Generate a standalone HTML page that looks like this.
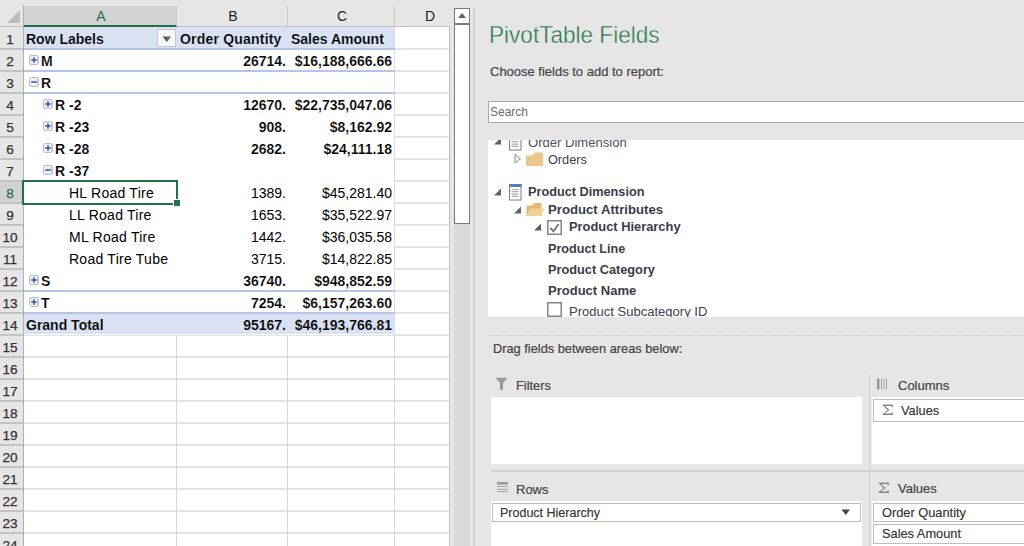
<!DOCTYPE html>
<html><head><meta charset="utf-8"><style>
html,body{margin:0;padding:0;}
body{width:1024px;height:546px;position:relative;overflow:hidden;background:#e6e6e6;font-family:'Liberation Sans',sans-serif;}
div{position:absolute;}
.t{position:absolute;white-space:nowrap;font-family:'Liberation Sans',sans-serif;}
svg{display:block}
</style></head><body>
<svg style="position:absolute;left:0;top:0" width="24" height="27"><polygon points="20,10 20,23 7,23" fill="#bcbcbc"/></svg>
<div style="left:0px;top:26px;width:450px;height:1px;background:#c2c2c2"></div>
<div style="left:23px;top:5px;width:1px;height:541px;background:#b0b0b0"></div>
<div style="left:24px;top:6px;width:152px;height:19px;background:#d2d2d2"></div>
<div style="left:24px;top:25px;width:153px;height:2px;background:#217346"></div>
<div style="left:176px;top:6px;width:1px;height:20px;background:#c8c8c8"></div>
<div style="left:287px;top:6px;width:1px;height:20px;background:#c8c8c8"></div>
<div style="left:394px;top:6px;width:1px;height:20px;background:#c8c8c8"></div>
<span class="t" style="left:1px;width:200px;text-align:center;top:9px;font-size:14px;line-height:14px;font-weight:normal;color:#217346;">A</span>
<span class="t" style="left:133px;width:200px;text-align:center;top:9px;font-size:14px;line-height:14px;font-weight:normal;color:#222;">B</span>
<span class="t" style="left:242px;width:200px;text-align:center;top:9px;font-size:14px;line-height:14px;font-weight:normal;color:#222;">C</span>
<span class="t" style="left:330px;width:200px;text-align:center;top:9px;font-size:14px;line-height:14px;font-weight:normal;color:#222;">D</span>
<div style="left:24px;top:27px;width:425px;height:519px;background:#fff"></div>
<div style="left:449px;top:26px;width:1px;height:520px;background:#c0c0c0"></div>
<div style="left:0px;top:48px;width:23px;height:2px;background:#c3c3c3"></div>
<div style="left:24px;top:48px;width:425px;height:2px;background:#e3e3e3"></div>
<div style="left:0px;top:70px;width:23px;height:2px;background:#c3c3c3"></div>
<div style="left:24px;top:70px;width:425px;height:2px;background:#e3e3e3"></div>
<div style="left:0px;top:92px;width:23px;height:2px;background:#c3c3c3"></div>
<div style="left:24px;top:92px;width:425px;height:2px;background:#e3e3e3"></div>
<div style="left:0px;top:114px;width:23px;height:2px;background:#c3c3c3"></div>
<div style="left:24px;top:114px;width:425px;height:2px;background:#e3e3e3"></div>
<div style="left:0px;top:136px;width:23px;height:2px;background:#c3c3c3"></div>
<div style="left:24px;top:136px;width:425px;height:2px;background:#e3e3e3"></div>
<div style="left:0px;top:158px;width:23px;height:2px;background:#c3c3c3"></div>
<div style="left:24px;top:158px;width:425px;height:2px;background:#e3e3e3"></div>
<div style="left:0px;top:180px;width:23px;height:2px;background:#c3c3c3"></div>
<div style="left:24px;top:180px;width:425px;height:2px;background:#e3e3e3"></div>
<div style="left:0px;top:202px;width:23px;height:2px;background:#c3c3c3"></div>
<div style="left:24px;top:202px;width:425px;height:2px;background:#e3e3e3"></div>
<div style="left:0px;top:224px;width:23px;height:2px;background:#c3c3c3"></div>
<div style="left:24px;top:224px;width:425px;height:2px;background:#e3e3e3"></div>
<div style="left:0px;top:246px;width:23px;height:2px;background:#c3c3c3"></div>
<div style="left:24px;top:246px;width:425px;height:2px;background:#e3e3e3"></div>
<div style="left:0px;top:268px;width:23px;height:2px;background:#c3c3c3"></div>
<div style="left:24px;top:268px;width:425px;height:2px;background:#e3e3e3"></div>
<div style="left:0px;top:290px;width:23px;height:2px;background:#c3c3c3"></div>
<div style="left:24px;top:290px;width:425px;height:2px;background:#e3e3e3"></div>
<div style="left:0px;top:312px;width:23px;height:2px;background:#c3c3c3"></div>
<div style="left:24px;top:312px;width:425px;height:2px;background:#e3e3e3"></div>
<div style="left:0px;top:334px;width:23px;height:2px;background:#c3c3c3"></div>
<div style="left:24px;top:334px;width:425px;height:2px;background:#e3e3e3"></div>
<div style="left:0px;top:356px;width:23px;height:2px;background:#c3c3c3"></div>
<div style="left:24px;top:356px;width:425px;height:2px;background:#e3e3e3"></div>
<div style="left:0px;top:378px;width:23px;height:2px;background:#c3c3c3"></div>
<div style="left:24px;top:378px;width:425px;height:2px;background:#e3e3e3"></div>
<div style="left:0px;top:400px;width:23px;height:2px;background:#c3c3c3"></div>
<div style="left:24px;top:400px;width:425px;height:2px;background:#e3e3e3"></div>
<div style="left:0px;top:422px;width:23px;height:2px;background:#c3c3c3"></div>
<div style="left:24px;top:422px;width:425px;height:2px;background:#e3e3e3"></div>
<div style="left:0px;top:444px;width:23px;height:2px;background:#c3c3c3"></div>
<div style="left:24px;top:444px;width:425px;height:2px;background:#e3e3e3"></div>
<div style="left:0px;top:466px;width:23px;height:2px;background:#c3c3c3"></div>
<div style="left:24px;top:466px;width:425px;height:2px;background:#e3e3e3"></div>
<div style="left:0px;top:488px;width:23px;height:2px;background:#c3c3c3"></div>
<div style="left:24px;top:488px;width:425px;height:2px;background:#e3e3e3"></div>
<div style="left:0px;top:510px;width:23px;height:2px;background:#c3c3c3"></div>
<div style="left:24px;top:510px;width:425px;height:2px;background:#e3e3e3"></div>
<div style="left:0px;top:532px;width:23px;height:2px;background:#c3c3c3"></div>
<div style="left:24px;top:532px;width:425px;height:2px;background:#e3e3e3"></div>
<div style="left:176px;top:27px;width:1px;height:519px;background:#d9d9d9"></div>
<div style="left:287px;top:27px;width:1px;height:519px;background:#d9d9d9"></div>
<div style="left:394px;top:27px;width:1px;height:519px;background:#d9d9d9"></div>
<div style="left:24px;top:27px;width:370px;height:308px;background:#fff"></div>
<div style="left:24px;top:27px;width:371px;height:21px;background:#d9e1f2"></div>
<div style="left:24px;top:48px;width:371px;height:2px;background:#b4c6e7"></div>
<div style="left:24px;top:70px;width:371px;height:2px;background:#b4c6e7"></div>
<div style="left:24px;top:92px;width:371px;height:2px;background:#b4c6e7"></div>
<div style="left:24px;top:290px;width:371px;height:2px;background:#b4c6e7"></div>
<div style="left:24px;top:312px;width:371px;height:2px;background:#b4c6e7"></div>
<div style="left:24px;top:314px;width:371px;height:20px;background:#d9e1f2"></div>
<div style="left:0px;top:182px;width:23px;height:20px;background:#d2d2d2"></div>
<span class="t" style="left:-90px;width:200px;text-align:center;top:33px;font-size:13.6px;line-height:13.6px;font-weight:normal;color:#333;-webkit-text-stroke:0.25px #333">1</span>
<span class="t" style="left:-90px;width:200px;text-align:center;top:55px;font-size:13.6px;line-height:13.6px;font-weight:normal;color:#333;-webkit-text-stroke:0.25px #333">2</span>
<span class="t" style="left:-90px;width:200px;text-align:center;top:77px;font-size:13.6px;line-height:13.6px;font-weight:normal;color:#333;-webkit-text-stroke:0.25px #333">3</span>
<span class="t" style="left:-90px;width:200px;text-align:center;top:99px;font-size:13.6px;line-height:13.6px;font-weight:normal;color:#333;-webkit-text-stroke:0.25px #333">4</span>
<span class="t" style="left:-90px;width:200px;text-align:center;top:121px;font-size:13.6px;line-height:13.6px;font-weight:normal;color:#333;-webkit-text-stroke:0.25px #333">5</span>
<span class="t" style="left:-90px;width:200px;text-align:center;top:143px;font-size:13.6px;line-height:13.6px;font-weight:normal;color:#333;-webkit-text-stroke:0.25px #333">6</span>
<span class="t" style="left:-90px;width:200px;text-align:center;top:165px;font-size:13.6px;line-height:13.6px;font-weight:normal;color:#333;-webkit-text-stroke:0.25px #333">7</span>
<span class="t" style="left:-90px;width:200px;text-align:center;top:187px;font-size:13.6px;line-height:13.6px;font-weight:normal;color:#217346;-webkit-text-stroke:0.25px #217346">8</span>
<span class="t" style="left:-90px;width:200px;text-align:center;top:209px;font-size:13.6px;line-height:13.6px;font-weight:normal;color:#333;-webkit-text-stroke:0.25px #333">9</span>
<span class="t" style="left:-90px;width:200px;text-align:center;top:231px;font-size:13.6px;line-height:13.6px;font-weight:normal;color:#333;-webkit-text-stroke:0.25px #333">10</span>
<span class="t" style="left:-90px;width:200px;text-align:center;top:253px;font-size:13.6px;line-height:13.6px;font-weight:normal;color:#333;-webkit-text-stroke:0.25px #333">11</span>
<span class="t" style="left:-90px;width:200px;text-align:center;top:275px;font-size:13.6px;line-height:13.6px;font-weight:normal;color:#333;-webkit-text-stroke:0.25px #333">12</span>
<span class="t" style="left:-90px;width:200px;text-align:center;top:297px;font-size:13.6px;line-height:13.6px;font-weight:normal;color:#333;-webkit-text-stroke:0.25px #333">13</span>
<span class="t" style="left:-90px;width:200px;text-align:center;top:319px;font-size:13.6px;line-height:13.6px;font-weight:normal;color:#333;-webkit-text-stroke:0.25px #333">14</span>
<span class="t" style="left:-90px;width:200px;text-align:center;top:341px;font-size:13.6px;line-height:13.6px;font-weight:normal;color:#333;-webkit-text-stroke:0.25px #333">15</span>
<span class="t" style="left:-90px;width:200px;text-align:center;top:363px;font-size:13.6px;line-height:13.6px;font-weight:normal;color:#333;-webkit-text-stroke:0.25px #333">16</span>
<span class="t" style="left:-90px;width:200px;text-align:center;top:385px;font-size:13.6px;line-height:13.6px;font-weight:normal;color:#333;-webkit-text-stroke:0.25px #333">17</span>
<span class="t" style="left:-90px;width:200px;text-align:center;top:407px;font-size:13.6px;line-height:13.6px;font-weight:normal;color:#333;-webkit-text-stroke:0.25px #333">18</span>
<span class="t" style="left:-90px;width:200px;text-align:center;top:429px;font-size:13.6px;line-height:13.6px;font-weight:normal;color:#333;-webkit-text-stroke:0.25px #333">19</span>
<span class="t" style="left:-90px;width:200px;text-align:center;top:451px;font-size:13.6px;line-height:13.6px;font-weight:normal;color:#333;-webkit-text-stroke:0.25px #333">20</span>
<span class="t" style="left:-90px;width:200px;text-align:center;top:473px;font-size:13.6px;line-height:13.6px;font-weight:normal;color:#333;-webkit-text-stroke:0.25px #333">21</span>
<span class="t" style="left:-90px;width:200px;text-align:center;top:495px;font-size:13.6px;line-height:13.6px;font-weight:normal;color:#333;-webkit-text-stroke:0.25px #333">22</span>
<span class="t" style="left:-90px;width:200px;text-align:center;top:517px;font-size:13.6px;line-height:13.6px;font-weight:normal;color:#333;-webkit-text-stroke:0.25px #333">23</span>
<span class="t" style="left:-90px;width:200px;text-align:center;top:539px;font-size:13.6px;line-height:13.6px;font-weight:normal;color:#333;-webkit-text-stroke:0.25px #333">24</span>
<div style="left:22px;top:180px;width:156px;height:25px;border:2px solid #217346;box-sizing:border-box"></div>
<div style="left:173px;top:199px;width:7px;height:7px;background:#fff"></div>
<div style="left:174px;top:200px;width:6px;height:6px;background:#217346"></div>
<div style="left:157px;top:29px;width:19px;height:18px;background:#f6f7f9;border:1px solid #c3c7cf;box-sizing:border-box"></div>
<svg style="position:absolute;left:162px;top:36px" width="10" height="7"><polygon points="0.5,0.5 9,0.5 4.75,6" fill="#5f5f5f"/></svg>
<span class="t" style="left:26px;top:32px;font-size:14px;line-height:14px;font-weight:bold;color:#000;-webkit-text-stroke:0.15px #d9e1f2">Row Labels</span>
<span class="t" style="left:180px;top:32px;font-size:14px;line-height:14px;font-weight:bold;color:#000;-webkit-text-stroke:0.15px #d9e1f2;letter-spacing:0.2px">Order Quantity</span>
<span class="t" style="left:291px;top:32px;font-size:14px;line-height:14px;font-weight:bold;color:#000;-webkit-text-stroke:0.15px #d9e1f2">Sales Amount</span>
<svg style="position:absolute;left:29px;top:55px" width="10" height="10"><rect x="0.5" y="0.5" width="9" height="9" rx="1.8" fill="#eef1f7" stroke="#adbbd8"/><rect x="8" y="1" width="1.5" height="8" fill="#c3cfe6"/><path d="M2.2 5H7.8" stroke="#40569a" stroke-width="1.5"/><path d="M5 2.2V7.8" stroke="#40569a" stroke-width="1.5"/></svg>
<span class="t" style="left:41px;top:54px;font-size:14px;line-height:14px;font-weight:bold;color:#000;-webkit-text-stroke:0.15px #fff">M</span>
<span class="t" style="right:738px;top:54px;font-size:14px;line-height:14px;font-weight:bold;color:#000;-webkit-text-stroke:0.15px #fff">26714.</span>
<span class="t" style="right:632px;top:54px;font-size:14px;line-height:14px;font-weight:bold;color:#000;-webkit-text-stroke:0.15px #fff">$16,188,666.66</span>
<svg style="position:absolute;left:29px;top:77px" width="10" height="10"><rect x="0.5" y="0.5" width="9" height="9" rx="1.8" fill="#eef1f7" stroke="#adbbd8"/><rect x="8" y="1" width="1.5" height="8" fill="#c3cfe6"/><path d="M2.2 5H7.8" stroke="#40569a" stroke-width="1.5"/></svg>
<span class="t" style="left:41px;top:76px;font-size:14px;line-height:14px;font-weight:bold;color:#000;-webkit-text-stroke:0.15px #fff">R</span>
<svg style="position:absolute;left:43px;top:99px" width="10" height="10"><rect x="0.5" y="0.5" width="9" height="9" rx="1.8" fill="#eef1f7" stroke="#adbbd8"/><rect x="8" y="1" width="1.5" height="8" fill="#c3cfe6"/><path d="M2.2 5H7.8" stroke="#40569a" stroke-width="1.5"/><path d="M5 2.2V7.8" stroke="#40569a" stroke-width="1.5"/></svg>
<span class="t" style="left:55px;top:98px;font-size:14px;line-height:14px;font-weight:bold;color:#000;-webkit-text-stroke:0.15px #fff">R -2</span>
<span class="t" style="right:738px;top:98px;font-size:14px;line-height:14px;font-weight:bold;color:#000;-webkit-text-stroke:0.15px #fff">12670.</span>
<span class="t" style="right:632px;top:98px;font-size:14px;line-height:14px;font-weight:bold;color:#000;-webkit-text-stroke:0.15px #fff">$22,735,047.06</span>
<svg style="position:absolute;left:43px;top:121px" width="10" height="10"><rect x="0.5" y="0.5" width="9" height="9" rx="1.8" fill="#eef1f7" stroke="#adbbd8"/><rect x="8" y="1" width="1.5" height="8" fill="#c3cfe6"/><path d="M2.2 5H7.8" stroke="#40569a" stroke-width="1.5"/><path d="M5 2.2V7.8" stroke="#40569a" stroke-width="1.5"/></svg>
<span class="t" style="left:55px;top:120px;font-size:14px;line-height:14px;font-weight:bold;color:#000;-webkit-text-stroke:0.15px #fff">R -23</span>
<span class="t" style="right:738px;top:120px;font-size:14px;line-height:14px;font-weight:bold;color:#000;-webkit-text-stroke:0.15px #fff">908.</span>
<span class="t" style="right:632px;top:120px;font-size:14px;line-height:14px;font-weight:bold;color:#000;-webkit-text-stroke:0.15px #fff">$8,162.92</span>
<svg style="position:absolute;left:43px;top:143px" width="10" height="10"><rect x="0.5" y="0.5" width="9" height="9" rx="1.8" fill="#eef1f7" stroke="#adbbd8"/><rect x="8" y="1" width="1.5" height="8" fill="#c3cfe6"/><path d="M2.2 5H7.8" stroke="#40569a" stroke-width="1.5"/><path d="M5 2.2V7.8" stroke="#40569a" stroke-width="1.5"/></svg>
<span class="t" style="left:55px;top:142px;font-size:14px;line-height:14px;font-weight:bold;color:#000;-webkit-text-stroke:0.15px #fff">R -28</span>
<span class="t" style="right:738px;top:142px;font-size:14px;line-height:14px;font-weight:bold;color:#000;-webkit-text-stroke:0.15px #fff">2682.</span>
<span class="t" style="right:632px;top:142px;font-size:14px;line-height:14px;font-weight:bold;color:#000;-webkit-text-stroke:0.15px #fff">$24,111.18</span>
<svg style="position:absolute;left:43px;top:165px" width="10" height="10"><rect x="0.5" y="0.5" width="9" height="9" rx="1.8" fill="#eef1f7" stroke="#adbbd8"/><rect x="8" y="1" width="1.5" height="8" fill="#c3cfe6"/><path d="M2.2 5H7.8" stroke="#40569a" stroke-width="1.5"/></svg>
<span class="t" style="left:55px;top:164px;font-size:14px;line-height:14px;font-weight:bold;color:#000;-webkit-text-stroke:0.15px #fff">R -37</span>
<span class="t" style="left:69px;top:186px;font-size:14px;line-height:14px;font-weight:normal;color:#000;letter-spacing:0.25px">HL Road Tire</span>
<span class="t" style="right:738px;top:186px;font-size:14px;line-height:14px;font-weight:normal;color:#000;">1389.</span>
<span class="t" style="right:632px;top:186px;font-size:14px;line-height:14px;font-weight:normal;color:#000;">$45,281.40</span>
<span class="t" style="left:69px;top:208px;font-size:14px;line-height:14px;font-weight:normal;color:#000;letter-spacing:0.25px">LL Road Tire</span>
<span class="t" style="right:738px;top:208px;font-size:14px;line-height:14px;font-weight:normal;color:#000;">1653.</span>
<span class="t" style="right:632px;top:208px;font-size:14px;line-height:14px;font-weight:normal;color:#000;">$35,522.97</span>
<span class="t" style="left:69px;top:230px;font-size:14px;line-height:14px;font-weight:normal;color:#000;letter-spacing:0.25px">ML Road Tire</span>
<span class="t" style="right:738px;top:230px;font-size:14px;line-height:14px;font-weight:normal;color:#000;">1442.</span>
<span class="t" style="right:632px;top:230px;font-size:14px;line-height:14px;font-weight:normal;color:#000;">$36,035.58</span>
<span class="t" style="left:69px;top:252px;font-size:14px;line-height:14px;font-weight:normal;color:#000;letter-spacing:0.25px">Road Tire Tube</span>
<span class="t" style="right:738px;top:252px;font-size:14px;line-height:14px;font-weight:normal;color:#000;">3715.</span>
<span class="t" style="right:632px;top:252px;font-size:14px;line-height:14px;font-weight:normal;color:#000;">$14,822.85</span>
<svg style="position:absolute;left:29px;top:275px" width="10" height="10"><rect x="0.5" y="0.5" width="9" height="9" rx="1.8" fill="#eef1f7" stroke="#adbbd8"/><rect x="8" y="1" width="1.5" height="8" fill="#c3cfe6"/><path d="M2.2 5H7.8" stroke="#40569a" stroke-width="1.5"/><path d="M5 2.2V7.8" stroke="#40569a" stroke-width="1.5"/></svg>
<span class="t" style="left:41px;top:274px;font-size:14px;line-height:14px;font-weight:bold;color:#000;-webkit-text-stroke:0.15px #fff">S</span>
<span class="t" style="right:738px;top:274px;font-size:14px;line-height:14px;font-weight:bold;color:#000;-webkit-text-stroke:0.15px #fff">36740.</span>
<span class="t" style="right:632px;top:274px;font-size:14px;line-height:14px;font-weight:bold;color:#000;-webkit-text-stroke:0.15px #fff">$948,852.59</span>
<svg style="position:absolute;left:29px;top:297px" width="10" height="10"><rect x="0.5" y="0.5" width="9" height="9" rx="1.8" fill="#eef1f7" stroke="#adbbd8"/><rect x="8" y="1" width="1.5" height="8" fill="#c3cfe6"/><path d="M2.2 5H7.8" stroke="#40569a" stroke-width="1.5"/><path d="M5 2.2V7.8" stroke="#40569a" stroke-width="1.5"/></svg>
<span class="t" style="left:41px;top:296px;font-size:14px;line-height:14px;font-weight:bold;color:#000;-webkit-text-stroke:0.15px #fff">T</span>
<span class="t" style="right:738px;top:296px;font-size:14px;line-height:14px;font-weight:bold;color:#000;-webkit-text-stroke:0.15px #fff">7254.</span>
<span class="t" style="right:632px;top:296px;font-size:14px;line-height:14px;font-weight:bold;color:#000;-webkit-text-stroke:0.15px #fff">$6,157,263.60</span>
<span class="t" style="left:26px;top:318px;font-size:14px;line-height:14px;font-weight:bold;color:#000;-webkit-text-stroke:0.15px #d9e1f2">Grand Total</span>
<span class="t" style="right:738px;top:318px;font-size:14px;line-height:14px;font-weight:bold;color:#000;-webkit-text-stroke:0.15px #d9e1f2">95167.</span>
<span class="t" style="right:632px;top:318px;font-size:14px;line-height:14px;font-weight:bold;color:#000;-webkit-text-stroke:0.15px #d9e1f2">$46,193,766.81</span>
<div style="left:450px;top:0px;width:24px;height:546px;background:#e6e6e6"></div>
<div style="left:454px;top:8px;width:16px;height:538px;background:#d9d9d9"></div>
<div style="left:454px;top:8px;width:16px;height:216px;background:#fff;border:1px solid #7a7a7a;box-sizing:border-box"></div>
<div style="left:454px;top:23px;width:16px;height:2px;background:#7a7a7a"></div>
<svg style="position:absolute;left:457px;top:12px" width="10" height="7"><polygon points="5,1 9,6 1,6" fill="#606060"/></svg>
<div style="left:473px;top:8px;width:2px;height:538px;background:#d2d2d2"></div>
<span class="t" style="left:488.5px;top:23px;font-size:24px;line-height:24px;font-weight:normal;color:#217346;-webkit-text-stroke:0.45px #e6e6e6;transform:scaleX(0.94);transform-origin:0 0">PivotTable Fields</span>
<span class="t" style="left:490px;top:65px;font-size:13.6px;line-height:13.6px;font-weight:normal;color:#444;transform:scaleX(0.955);transform-origin:0 0;-webkit-text-stroke:0.2px #444">Choose fields to add to report:</span>
<div style="left:488px;top:101px;width:540px;height:22px;background:#fff;border:1px solid #ababab;box-sizing:border-box"></div>
<span class="t" style="left:490px;top:106px;font-size:12px;line-height:12px;font-weight:normal;color:#6d6d6d;">Search</span>
<div style="left:488px;top:140px;width:540px;height:177px;background:#fff;overflow:hidden">
<svg style="position:absolute;left:6px;top:-3px" width="8" height="9"><polygon points="7,0.5 7,7.5 0,7.5" fill="#626262"/></svg>
<svg style="position:absolute;left:21px;top:-6px" width="13" height="17"><rect x="0.5" y="0.5" width="11.5" height="15.5" fill="#fff" stroke="#7e7e7e"/><rect x="0" y="0" width="12.5" height="3" fill="#8a8a8a"/><path d="M2.5 5.5H9.5M2.5 7.7H9.5M2.5 10.2H9.5M2.5 12.4H9.5" stroke="#ababab" stroke-width="1.2"/></svg>
<span class="t" style="left:40px;top:-4px;font-size:13.5px;line-height:13.5px;font-weight:normal;color:#505060;transform:scaleX(0.967);transform-origin:0 0">Order Dimension</span>
<svg style="position:absolute;left:26px;top:14px" width="8" height="10"><polygon points="1,0.5 6.5,4.75 1,9" fill="none" stroke="#8a8a8a" stroke-width="1"/></svg>
<svg style="position:absolute;left:38px;top:12px" width="18" height="15"><path d="M0 3.5H6.5L8.5 0.5H17V14H0Z" fill="#ebc78b"/></svg>
<span class="t" style="left:60px;top:13px;font-size:13.5px;line-height:13.5px;font-weight:normal;color:#404050;transform:scaleX(0.94);transform-origin:0 0">Orders</span>
<svg style="position:absolute;left:6px;top:48px" width="8" height="9"><polygon points="7,0.5 7,7.5 0,7.5" fill="#626262"/></svg>
<svg style="position:absolute;left:21px;top:44px" width="13" height="17"><rect x="0.5" y="0.5" width="11.5" height="15.5" fill="#fff" stroke="#7e7e7e"/><rect x="0" y="0" width="12.5" height="3" fill="#4f81bd"/><path d="M2.5 5.5H9.5M2.5 7.7H9.5M2.5 10.2H9.5M2.5 12.4H9.5" stroke="#ababab" stroke-width="1.2"/></svg>
<span class="t" style="left:40px;top:45px;font-size:13.5px;line-height:13.5px;font-weight:bold;color:#3c3c48;transform:scaleX(0.941);transform-origin:0 0">Product Dimension</span>
<svg style="position:absolute;left:26px;top:66px" width="8" height="9"><polygon points="7,0.5 7,7.5 0,7.5" fill="#626262"/></svg>
<svg style="position:absolute;left:38px;top:62px" width="18" height="15"><path d="M0.5 3.5H6L8 1H15.5V14H0.5Z" fill="#e3b873"/><path d="M0.5 14L4 6.5H18L15 14Z" fill="#f1d194"/></svg>
<span class="t" style="left:60px;top:63px;font-size:13.5px;line-height:13.5px;font-weight:bold;color:#3c3c48;transform:scaleX(0.975);transform-origin:0 0">Product Attributes</span>
<svg style="position:absolute;left:46px;top:83px" width="8" height="9"><polygon points="7,0.5 7,7.5 0,7.5" fill="#626262"/></svg>
<svg style="position:absolute;left:59px;top:80px" width="16" height="16"><rect x="0.75" y="0.75" width="13.5" height="13.5" fill="#fff" stroke="#858585" stroke-width="1.5"/><path d="M3.3 7.8L6.4 11.3L11.6 4" fill="none" stroke="#767676" stroke-width="1.9"/></svg>
<span class="t" style="left:81px;top:80px;font-size:13.5px;line-height:13.5px;font-weight:bold;color:#3c3c48;transform:scaleX(0.953);transform-origin:0 0">Product Hierarchy</span>
<span class="t" style="left:60px;top:102px;font-size:13.5px;line-height:13.5px;font-weight:bold;color:#3c3c48;transform:scaleX(0.936);transform-origin:0 0">Product Line</span>
<span class="t" style="left:60px;top:123px;font-size:13.5px;line-height:13.5px;font-weight:bold;color:#3c3c48;transform:scaleX(0.944);transform-origin:0 0">Product Category</span>
<span class="t" style="left:60px;top:144px;font-size:13.5px;line-height:13.5px;font-weight:bold;color:#3c3c48;transform:scaleX(0.964);transform-origin:0 0">Product Name</span>
<svg style="position:absolute;left:59px;top:162px" width="16" height="16"><rect x="0.75" y="0.75" width="13.5" height="13.5" fill="#fff" stroke="#858585" stroke-width="1.5"/></svg>
<span class="t" style="left:81px;top:165px;font-size:13.5px;line-height:13.5px;font-weight:normal;color:#404050;transform:scaleX(0.965);transform-origin:0 0">Product Subcategory ID</span>
</div>
<div style="left:490px;top:335px;width:540px;height:1px;background-image:linear-gradient(90deg,#b4b4b4 50%,transparent 50%);background-size:3px 1px"></div>
<span class="t" style="left:493px;top:343px;font-size:12.8px;line-height:12.8px;font-weight:normal;color:#444;-webkit-text-stroke:0.2px #444">Drag fields between areas below:</span>
<svg style="position:absolute;left:495px;top:377px" width="13" height="14"><path d="M0.5 0.8H12.5L8 6V12.8H5V6Z" fill="#9a9a9a"/></svg>
<span class="t" style="left:516px;top:380px;font-size:12.8px;line-height:12.8px;font-weight:normal;color:#444;-webkit-text-stroke:0.2px #444">Filters</span>
<div style="left:491px;top:397px;width:371px;height:67px;background:#fff"></div>
<div style="left:869px;top:375px;width:1px;height:171px;background:#cfcfcf"></div>
<svg style="position:absolute;left:877px;top:378px" width="11" height="12"><path d="M1.2 0.5V11.5" stroke="#959595" stroke-width="2.4"/><path d="M4.5 0.5V11.5M7 0.5V11.5M9.5 0.5V11.5" stroke="#a0a0a0" stroke-width="1"/></svg>
<span class="t" style="left:898px;top:379px;font-size:13px;line-height:13px;font-weight:normal;color:#444;-webkit-text-stroke:0.2px #444">Columns</span>
<div style="left:872px;top:397px;width:160px;height:67px;background:#fff"></div>
<div style="left:873px;top:399px;width:160px;height:23px;background:#fff;border:1px solid #bdbdbd;box-sizing:border-box"></div>
<svg style="position:absolute;left:882px;top:404px" width="12" height="12"><polygon points="0.6,0.6 10.8,0.6 10.8,3.2 9.8,3.2 9.2,2.1 3.2,2.1 7.6,5.9 2.6,9.6 9.2,9.6 9.8,8.3 10.8,8.3 10.8,11 0.6,11 0.6,10.3 5.6,5.9 0.6,1.3" fill="#858585"/></svg>
<span class="t" style="left:901px;top:405px;font-size:12.8px;line-height:12.8px;font-weight:normal;color:#333;-webkit-text-stroke:0.15px #333">Values</span>
<div style="left:491px;top:470px;width:540px;height:2px;background:#d0d0d0"></div>
<svg style="position:absolute;left:497px;top:482px" width="11" height="11"><rect x="0" y="0" width="11" height="2.6" fill="#9c9c9c"/><path d="M0 4.5H11M0 7.4H11M0 9.6H11" stroke="#a4a4a4" stroke-width="1"/></svg>
<span class="t" style="left:516px;top:483px;font-size:13px;line-height:13px;font-weight:normal;color:#444;-webkit-text-stroke:0.2px #444">Rows</span>
<div style="left:491px;top:501px;width:371px;height:45px;background:#fff"></div>
<div style="left:492px;top:503px;width:369px;height:19px;background:#fff;border:1px solid #bdbdbd;box-sizing:border-box"></div>
<span class="t" style="left:500px;top:507px;font-size:12.5px;line-height:12.5px;font-weight:normal;color:#333;-webkit-text-stroke:0.15px #333">Product Hierarchy</span>
<svg style="position:absolute;left:841px;top:509px" width="10" height="7"><polygon points="0.5,0.5 9,0.5 4.75,6" fill="#444"/></svg>
<svg style="position:absolute;left:878px;top:482px" width="12" height="12"><polygon points="0.6,0.6 10.8,0.6 10.8,3.2 9.8,3.2 9.2,2.1 3.2,2.1 7.6,5.9 2.6,9.6 9.2,9.6 9.8,8.3 10.8,8.3 10.8,11 0.6,11 0.6,10.3 5.6,5.9 0.6,1.3" fill="#858585"/></svg>
<span class="t" style="left:898px;top:482px;font-size:13px;line-height:13px;font-weight:normal;color:#444;-webkit-text-stroke:0.2px #444">Values</span>
<div style="left:872px;top:501px;width:160px;height:45px;background:#fff"></div>
<div style="left:873px;top:503px;width:160px;height:19px;background:#fff;border:1px solid #bdbdbd;box-sizing:border-box"></div>
<span class="t" style="left:882px;top:507px;font-size:12.8px;line-height:12.8px;font-weight:normal;color:#333;-webkit-text-stroke:0.15px #333">Order Quantity</span>
<div style="left:873px;top:524px;width:160px;height:20px;background:#fff;border:1px solid #bdbdbd;box-sizing:border-box"></div>
<span class="t" style="left:882px;top:528px;font-size:12.8px;line-height:12.8px;font-weight:normal;color:#333;-webkit-text-stroke:0.15px #333">Sales Amount</span>
</body></html>
